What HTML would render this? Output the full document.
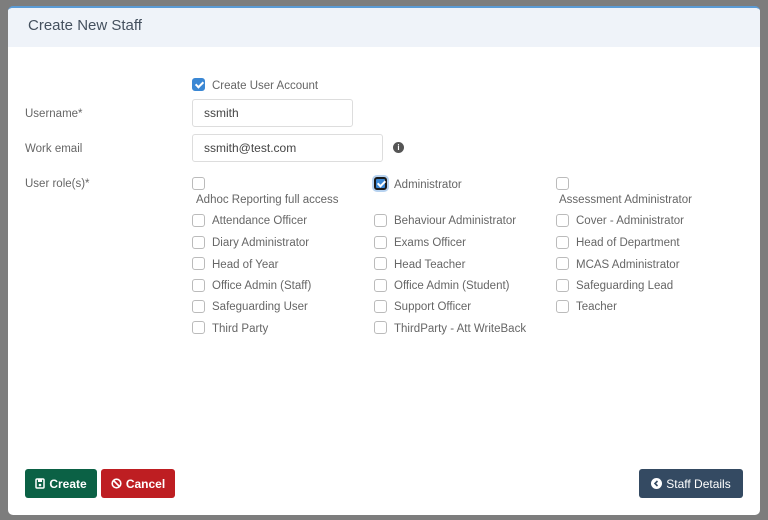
<!DOCTYPE html>
<html><head><style>
*{margin:0;padding:0;box-sizing:border-box}
body{width:768px;height:520px;background:#7d7d7d;font-family:"Liberation Sans",sans-serif;position:relative;overflow:hidden;color:#666}
.m{position:absolute;left:8px;top:6px;width:752px;height:509px;background:#fff;border-radius:5px;border-top:2px solid #5b9bd5;overflow:hidden}
.h{height:39px;background:#eff3f9;padding:9px 20px;font-size:15px;color:#44505e}
.a{position:absolute;font-size:11.5px;color:#666;white-space:nowrap;margin-top:2px}
.cb{position:absolute;width:13px;height:13px;border:1px solid #bbb;border-radius:3px;background:#fff}
.ck{background:#3a87d4;border-color:#3a87d4}
.ck::after{content:"";position:absolute;left:3.5px;top:1px;width:3px;height:6px;border:solid #fff;border-width:0 2px 2px 0;transform:rotate(45deg)}
.dk{border:2px solid #1a1a1a;box-shadow:0 0 0 2px #b8d3f0}
.dk::after{left:2.5px;top:0;border-color:#fff}
.dk{background:#3a87d4}
.in{position:absolute;border:1px solid #ddd;border-radius:3px;font-size:12px;color:#444;padding:0 11px;display:flex;align-items:center}
.b{position:absolute;top:469px;height:29px;border-radius:3px;color:#fff;font-size:12px;font-weight:bold;display:flex;align-items:center;justify-content:center;gap:4px}
</style></head><body>
<div class="m">
<div class="h">Create New Staff</div>
</div>
<div class="cb ck" style="left:192px;top:78px"></div><div class="a" style="left:212px;top:78px">Create User Account</div>
<div class="a" style="left:25px;top:106px">Username*</div>
<div class="in" style="left:192px;top:99px;width:161px;height:28px">ssmith</div>
<div class="a" style="left:25px;top:141px">Work email</div>
<div class="in" style="left:192px;top:134px;width:191px;height:28px">ssmith@test.com</div>
<div style="position:absolute;left:393px;top:142px;width:11px;height:11px;border-radius:50%;background:#555;color:#fff;font-size:8px;font-weight:bold;text-align:center;line-height:11px">i</div>
<div class="a" style="left:25px;top:176px">User role(s)*</div>

<div class="cb" style="left:192px;top:177px"></div><div class="a" style="left:196px;top:192px">Adhoc Reporting full access</div>
<div class="cb ck dk" style="left:374px;top:177px"></div><div class="a" style="left:394px;top:177px">Administrator</div>
<div class="cb" style="left:556px;top:177px"></div><div class="a" style="left:559px;top:192px">Assessment Administrator</div>

<div class="cb" style="left:192px;top:214px"></div><div class="a" style="left:212px;top:213px">Attendance Officer</div>
<div class="cb" style="left:374px;top:214px"></div><div class="a" style="left:394px;top:213px">Behaviour Administrator</div>
<div class="cb" style="left:556px;top:214px"></div><div class="a" style="left:576px;top:213px">Cover - Administrator</div>

<div class="cb" style="left:192px;top:236px"></div><div class="a" style="left:212px;top:235px">Diary Administrator</div>
<div class="cb" style="left:374px;top:236px"></div><div class="a" style="left:394px;top:235px">Exams Officer</div>
<div class="cb" style="left:556px;top:236px"></div><div class="a" style="left:576px;top:235px">Head of Department</div>

<div class="cb" style="left:192px;top:257px"></div><div class="a" style="left:212px;top:257px">Head of Year</div>
<div class="cb" style="left:374px;top:257px"></div><div class="a" style="left:394px;top:257px">Head Teacher</div>
<div class="cb" style="left:556px;top:257px"></div><div class="a" style="left:576px;top:257px">MCAS Administrator</div>

<div class="cb" style="left:192px;top:279px"></div><div class="a" style="left:212px;top:278px">Office Admin (Staff)</div>
<div class="cb" style="left:374px;top:279px"></div><div class="a" style="left:394px;top:278px">Office Admin (Student)</div>
<div class="cb" style="left:556px;top:279px"></div><div class="a" style="left:576px;top:278px">Safeguarding Lead</div>

<div class="cb" style="left:192px;top:300px"></div><div class="a" style="left:212px;top:299px">Safeguarding User</div>
<div class="cb" style="left:374px;top:300px"></div><div class="a" style="left:394px;top:299px">Support Officer</div>
<div class="cb" style="left:556px;top:300px"></div><div class="a" style="left:576px;top:299px">Teacher</div>

<div class="cb" style="left:192px;top:321px"></div><div class="a" style="left:212px;top:321px">Third Party</div>
<div class="cb" style="left:374px;top:321px"></div><div class="a" style="left:394px;top:321px">ThirdParty - Att WriteBack</div>

<div class="b" style="left:25px;width:72px;background:#0b6145"><svg width="10" height="11" viewBox="0 0 10 11"><rect x="1" y="1" width="8" height="9" rx="1" fill="none" stroke="#fff" stroke-width="1.5"/><rect x="3" y="1" width="4" height="3" fill="#fff"/><circle cx="5" cy="7" r="1.3" fill="#fff"/></svg>Create</div>
<div class="b" style="left:101px;width:74px;background:#be1e22"><svg width="11" height="11" viewBox="0 0 11 11"><circle cx="5.5" cy="5.5" r="4.3" fill="none" stroke="#fff" stroke-width="1.6"/><line x1="2.5" y1="2.5" x2="8.5" y2="8.5" stroke="#fff" stroke-width="1.6"/></svg>Cancel</div>
<div class="b" style="left:639px;width:104px;background:#344a62;font-weight:normal"><svg width="11" height="11" viewBox="0 0 11 11"><circle cx="5.5" cy="5.5" r="5.5" fill="#fff"/><path d="M6.5 3 L4 5.5 L6.5 8" stroke="#344a62" stroke-width="1.6" fill="none"/></svg>Staff Details</div>
</body></html>
